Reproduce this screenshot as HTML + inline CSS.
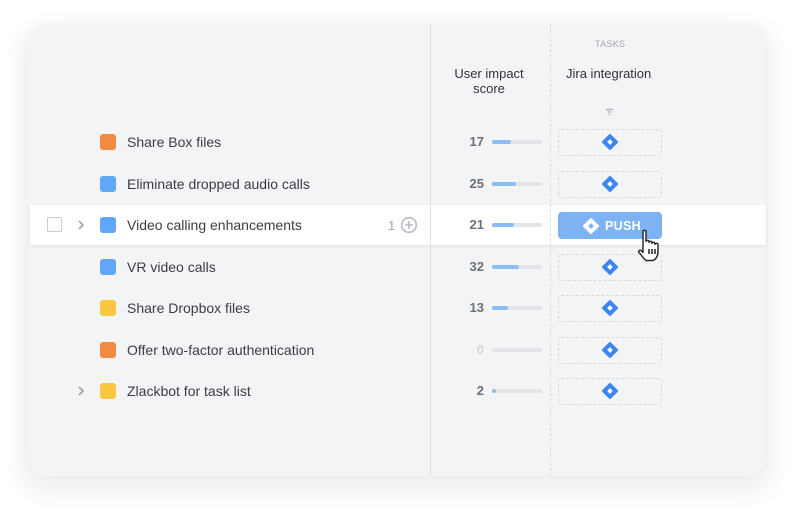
<!DOCTYPE html>
<html><head><meta charset="utf-8"><style>
*{margin:0;padding:0;box-sizing:border-box}
body{width:794px;height:513px;background:#fff;position:relative;overflow:hidden;font-family:"Liberation Sans",Arial,sans-serif}
.panel{position:absolute;left:28px;top:24px;width:738px;height:452px;background:#f3f4f6;border-radius:18px;box-shadow:0 10px 22px 8px rgba(0,0,0,0.06),0 0 8px rgba(0,0,0,0.03)}
.vline{position:absolute;left:430px;top:24px;width:1px;height:452px;background:#dcdee2}
.dline{position:absolute;left:550px;top:24px;height:452px;border-left:1px dashed #d8dadf}
.hdr{position:absolute;font-size:13px;color:#2f3238;text-align:center}
.sq{position:absolute;left:100px;width:16px;height:16px;border-radius:3px}
.lbl{position:absolute;left:127px;font-size:14px;color:#3a3d44;line-height:16px}
.num{position:absolute;width:40px;left:444px;text-align:right;font-size:13px;font-weight:bold;color:#6c7079;line-height:16px}
.bar{position:absolute;left:492px;width:50px;height:4px;border-radius:2px;background:#e2e4e8}
.bar i{display:block;height:4px;border-radius:2px;background:#8dbcf5}
.box{position:absolute;left:558px;width:104px;height:27px;border:1px dashed #d6d8dd;border-radius:3px}
.dia{position:absolute;left:45px;top:6px;width:12px;height:12px;background:#3c86f2;transform:rotate(45deg);border-radius:1px}
.dia:after{content:"";position:absolute;left:4px;top:4px;width:4px;height:4px;background:#fff}
</style></head><body>
<div class="panel"></div>
<div style="position:absolute;left:30px;top:205px;width:736px;height:40px;background:#fff;box-shadow:0 1px 3px rgba(0,0,0,0.08)"></div>
<div class="vline"></div><div class="dline"></div>
<div class="hdr" style="left:595px;top:39px;font-size:9px;color:#a3a7ae;letter-spacing:.3px">TASKS</div>
<div class="hdr" style="left:448px;top:66px;width:82px;line-height:15px">User impact score</div>
<div class="hdr" style="left:566px;top:66px">Jira integration</div>
<svg style="position:absolute;left:605px;top:108px" width="9" height="9" viewBox="0 0 9 9"><path d="M1 1.5h7M2.5 4h4M3.7 6.5h1.6" stroke="#a8acb3" stroke-width="1.2"/></svg>

<div style="position:absolute;left:47px;top:217px;width:15px;height:15px;border:1px solid #c9ccd2;border-radius:2px;background:#fff"></div>
<svg style="position:absolute;left:77px;top:219px" width="8" height="12"><path d="M2 2l4 4-4 4" fill="none" stroke="#a0a4ab" stroke-width="1.6"/></svg>
<svg style="position:absolute;left:77px;top:385px" width="8" height="12"><path d="M2 2l4 4-4 4" fill="none" stroke="#a0a4ab" stroke-width="1.6"/></svg>
<div style="position:absolute;left:388px;top:218px;font-size:13px;color:#a3a7ae">1</div>
<svg style="position:absolute;left:400px;top:216px" width="18" height="18"><circle cx="9" cy="9" r="7.3" fill="none" stroke="#b7bbc2" stroke-width="1.6"/><path d="M9 5v8M5 9h8" stroke="#b7bbc2" stroke-width="1.6"/></svg>

<div class="sq" style="top:134px;background:#f28a43"></div><div class="lbl" style="top:134px">Share Box files</div>
<div class="sq" style="top:176px;background:#62a6f8"></div><div class="lbl" style="top:176px">Eliminate dropped audio calls</div>
<div class="sq" style="top:217px;background:#62a6f8"></div><div class="lbl" style="top:217px">Video calling enhancements</div>
<div class="sq" style="top:259px;background:#62a6f8"></div><div class="lbl" style="top:259px">VR video calls</div>
<div class="sq" style="top:300px;background:#f8c840"></div><div class="lbl" style="top:300px">Share Dropbox files</div>
<div class="sq" style="top:342px;background:#f28a43"></div><div class="lbl" style="top:342px">Offer two-factor authentication</div>
<div class="sq" style="top:383px;background:#f8c840"></div><div class="lbl" style="top:383px">Zlackbot for task list</div>

<div class="num" style="top:134px">17</div><div class="bar" style="top:140px"><i style="width:19px"></i></div>
<div class="num" style="top:176px">25</div><div class="bar" style="top:182px"><i style="width:24px"></i></div>
<div class="num" style="top:217px">21</div><div class="bar" style="top:223px"><i style="width:22px"></i></div>
<div class="num" style="top:259px">32</div><div class="bar" style="top:265px"><i style="width:27px"></i></div>
<div class="num" style="top:300px">13</div><div class="bar" style="top:306px"><i style="width:16px"></i></div>
<div class="num" style="top:342px;color:#d4d7dc">0</div><div class="bar" style="top:348px"></div>
<div class="num" style="top:383px">2</div><div class="bar" style="top:389px"><i style="width:4px"></i></div>

<div class="box" style="top:129px"><div class="dia"></div></div>
<div class="box" style="top:171px"><div class="dia"></div></div>
<div style="position:absolute;left:558px;top:212px;width:104px;height:27px;background:#7eb3f3;border-radius:4px">
<div style="position:absolute;left:27px;top:8px;width:12px;height:12px;background:#fff;transform:rotate(45deg);border-radius:1px"><div style="position:absolute;left:4px;top:4px;width:4px;height:4px;background:#7eb3f3"></div></div>
<div style="position:absolute;left:47px;top:7px;color:#fff;font-weight:bold;font-size:12.5px;letter-spacing:.3px">PUSH</div></div>
<div class="box" style="top:254px"><div class="dia"></div></div>
<div class="box" style="top:295px"><div class="dia"></div></div>
<div class="box" style="top:337px"><div class="dia"></div></div>
<div class="box" style="top:378px"><div class="dia"></div></div>

<svg style="position:absolute;left:636px;top:228px" width="28" height="36" viewBox="0 0 28 36"><path d="M7 3.5c0-1.5 3-1.5 3 0v10c0-1.6 3-1.6 3 0v1c0-1.6 3-1.6 3 0v1c0-1.6 3-1.6 3 0v1c0-1.6 3-1.6 3 0v7c0 4-2 8-5 9h-7c-2-1-4-5-7-8-1-1.2 0.5-2.8 2-2l2 2z" fill="#fff" stroke="#222" stroke-width="1.4" stroke-linejoin="round"/><path d="M13 21v5M16 21v5M19 21v5" stroke="#222" stroke-width="1.5"/></svg>
</body></html>
